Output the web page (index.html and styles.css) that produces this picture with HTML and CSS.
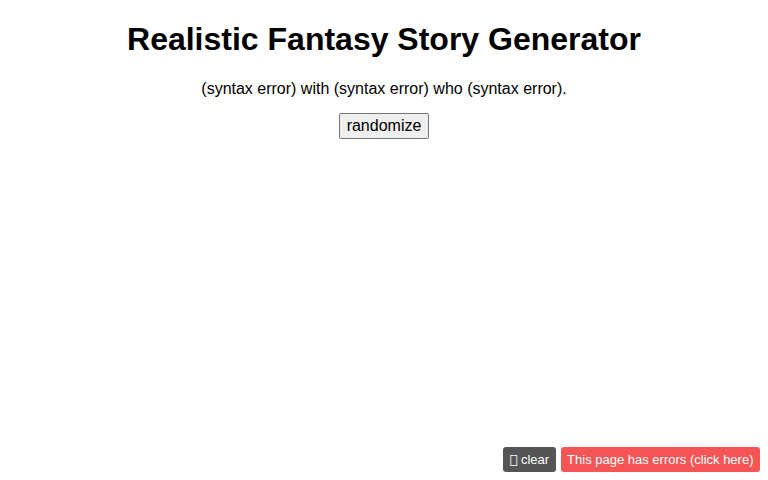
FILE: index.html
```html
<!DOCTYPE html>
<html>
<head>
<meta charset="utf-8">
<link rel="stylesheet" href="styles.css">
</head>
<body>
<h1 class="title">Realistic Fantasy Story Generator</h1>
<p class="story">(syntax error) with (syntax error) who (syntax error).</p>
<p class="actions"><button class="randomize">randomize</button></p>
<div class="errors">
  <button class="clear"><span class="icon">&#xf1f8;</span> clear</button>
  <button class="report">This page has errors (click here)</button>
</div>
</body>
</html>
```
FILE: styles.css
```css
body {
  margin: 0 8px;
  font-family: "Liberation Sans", Arial, sans-serif;
  text-align: center;
  background: #fff;
  color: #000;
}
.title {
  font-size: 32px;
  font-weight: bold;
  margin: 0;
  padding-top: 21px;
  margin-bottom: 22px;
}
.story {
  font-size: 16px;
  margin: 0 0 15px;
}
.actions {
  margin: 0;
}
.randomize {
  font-family: "Liberation Sans", Arial, sans-serif;
  font-size: 16px;
  padding: 3px 7px;
  border: 1px solid #767676;
  border-radius: 2px;
  background: #efefef;
  color: #000;
}
.errors {
  position: fixed;
  right: 8px;
  bottom: 8px;
  display: flex;
  gap: 5px;
}
.errors button {
  font-family: "Liberation Sans", Arial, sans-serif;
  font-size: 13px;
  border: none;
  border-radius: 3px;
  height: 25px;
  padding: 0 6.5px;
  color: #fff;
}
.clear {
  background: #555555;
  padding: 0 6px;
}
.report {
  background: #f55555;
  color: #fde8e8;
}
.icon {
  font-family: "DejaVu Sans", sans-serif;
}
```
